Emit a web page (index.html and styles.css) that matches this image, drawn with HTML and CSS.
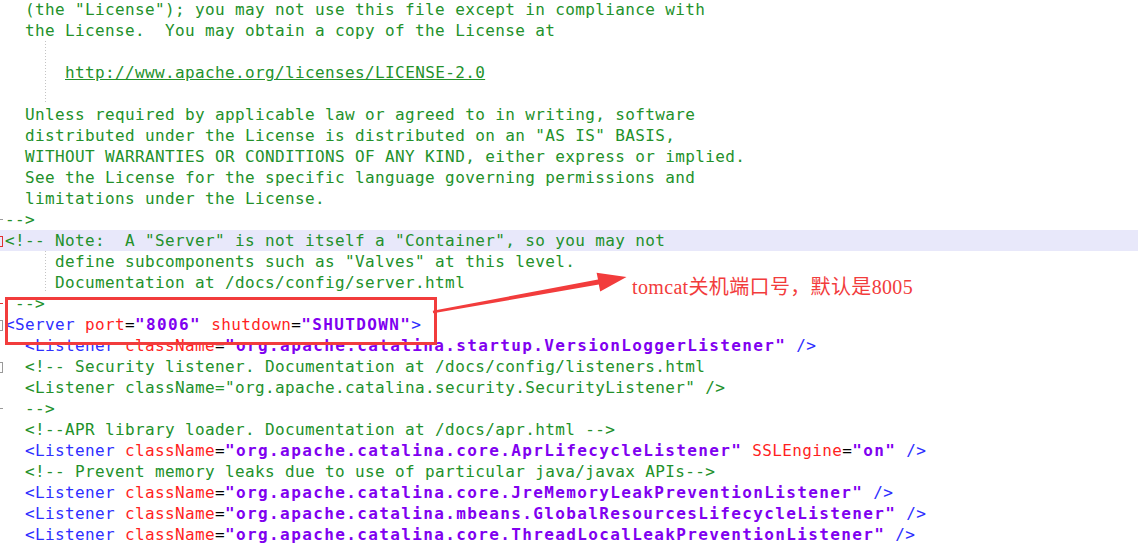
FILE: index.html
```html
<!DOCTYPE html>
<html>
  <head>
    <title>server.xml</title>
    <link rel="stylesheet" href="styles.css">
  </head>
  <body>
    <div class="editor">
      <div class="line"><span class="gutter"></span><span class="code c">  (the "License"); you may not use this file except in compliance with</span></div>
      <div class="line"><span class="gutter"></span><span class="code c">  the License.  You may obtain a copy of the License at</span></div>
      <div class="line guide"><span class="gutter"></span><span class="code c"> </span></div>
      <div class="line guide"><span class="gutter"></span><span class="code c">      <span class="link">http://www.apache.org/licenses/LICENSE-2.0</span></span></div>
      <div class="line guide"><span class="gutter"></span><span class="code c"> </span></div>
      <div class="line"><span class="gutter"></span><span class="code c">  Unless required by applicable law or agreed to in writing, software</span></div>
      <div class="line"><span class="gutter"></span><span class="code c">  distributed under the License is distributed on an "AS IS" BASIS,</span></div>
      <div class="line"><span class="gutter"></span><span class="code c">  WITHOUT WARRANTIES OR CONDITIONS OF ANY KIND, either express or implied.</span></div>
      <div class="line"><span class="gutter"></span><span class="code c">  See the License for the specific language governing permissions and</span></div>
      <div class="line"><span class="gutter"></span><span class="code c">  limitations under the License.</span></div>
      <div class="line"><span class="gutter"><span class="tick"></span></span><span class="code c">--&gt;</span></div>
      <div class="line current"><span class="gutter"><span class="fold red"></span></span><span class="code c">&lt;!-- Note:  A "Server" is not itself a "Container", so you may not</span></div>
      <div class="line guide"><span class="gutter"></span><span class="code c">     define subcomponents such as "Valves" at this level.</span></div>
      <div class="line guide"><span class="gutter"></span><span class="code c">     Documentation at /docs/config/server.html</span></div>
      <div class="line"><span class="gutter"><span class="tick red"></span></span><span class="code c"> --&gt;</span></div>
      <div class="line"><span class="gutter"><span class="fold"></span></span><span class="code"><span class="t">&lt;Server</span> <span class="a">port</span>=<span class="v">"8006"</span> <span class="a">shutdown</span>=<span class="v">"SHUTDOWN"</span><span class="t">&gt;</span></span></div>
      <div class="line"><span class="gutter"></span><span class="code">  <span class="t">&lt;Listener</span> <span class="a">className</span>=<span class="v">"org.apache.catalina.startup.VersionLoggerListener"</span> <span class="t">/&gt;</span></span></div>
      <div class="line"><span class="gutter"><span class="fold"></span></span><span class="code c">  &lt;!-- Security listener. Documentation at /docs/config/listeners.html</span></div>
      <div class="line"><span class="gutter"></span><span class="code c">  &lt;Listener className="org.apache.catalina.security.SecurityListener" /&gt;</span></div>
      <div class="line"><span class="gutter"><span class="tick"></span></span><span class="code c">  --&gt;</span></div>
      <div class="line"><span class="gutter"></span><span class="code c">  &lt;!--APR library loader. Documentation at /docs/apr.html --&gt;</span></div>
      <div class="line"><span class="gutter"></span><span class="code">  <span class="t">&lt;Listener</span> <span class="a">className</span>=<span class="v">"org.apache.catalina.core.AprLifecycleListener"</span> <span class="a">SSLEngine</span>=<span class="v">"on"</span> <span class="t">/&gt;</span></span></div>
      <div class="line"><span class="gutter"></span><span class="code c">  &lt;!-- Prevent memory leaks due to use of particular java/javax APIs--&gt;</span></div>
      <div class="line"><span class="gutter"></span><span class="code">  <span class="t">&lt;Listener</span> <span class="a">className</span>=<span class="v">"org.apache.catalina.core.JreMemoryLeakPreventionListener"</span> <span class="t">/&gt;</span></span></div>
      <div class="line"><span class="gutter"></span><span class="code">  <span class="t">&lt;Listener</span> <span class="a">className</span>=<span class="v">"org.apache.catalina.mbeans.GlobalResourcesLifecycleListener"</span> <span class="t">/&gt;</span></span></div>
      <div class="line"><span class="gutter"></span><span class="code">  <span class="t">&lt;Listener</span> <span class="a">className</span>=<span class="v">"org.apache.catalina.core.ThreadLocalLeakPreventionListener"</span> <span class="t">/&gt;</span></span></div>

      <div class="mark-box"></div>
      <svg class="mark-arrow" width="1138" height="559" viewBox="0 0 1138 559">
        <polygon points="433.2,313.2 598.8,284.6 600.2,291.4 626.5,277 596.6,272.8 598,279.4 432.8,310.8" fill="#f23c3c"/>
      </svg>
      <div class="mark-note">tomcat关机端口号，默认是8005</div>
    </div>
  </body>
</html>
```
FILE: styles.css
```css
body {
  margin: 0;
  background-color: white;
}
.editor {
  position: relative;
  height: 560px;
  margin-top: -1px;
  overflow: hidden;
  font-family: "DejaVu Sans Mono", "Liberation Mono", monospace;
  font-size: 16px;
  letter-spacing: 0.37px;
  line-height: 21px;
  color: black;
}
.line {
  display: flex;
  height: 21px;
}
.line.current {
  background-color: #e8e8fa;
}
.line.guide {
  background-image: repeating-linear-gradient(to bottom, #c4c4c4 0 1px, transparent 1px 3px);
  background-size: 1px 100%;
  background-position: 45px 0;
  background-repeat: no-repeat;
}
.gutter {
  width: 5px;
  flex-shrink: 0;
  position: relative;
}
.code {
  white-space: pre;
}
.c {
  color: #23912a;
}
.link {
  text-decoration: underline;
}
.t {
  color: #2f2fff;
}
.a {
  color: #ff1f1f;
}
.v {
  color: #8000f0;
  font-weight: bold;
  letter-spacing: 1.37px;
}
.fold {
  position: absolute;
  left: -6px;
  top: 6px;
  width: 7px;
  height: 9px;
  border: 1px solid #9a9a9a;
}
.fold.red {
  border-color: #e23030;
}
.tick {
  position: absolute;
  left: 0;
  top: 10px;
  width: 3px;
  height: 1px;
  background-color: #9a9a9a;
}
.tick.red {
  background-color: #e23030;
}
.mark-box {
  position: absolute;
  left: 5px;
  top: 298px;
  width: 426px;
  height: 42px;
  border: 3px solid #f23c3c;
}
.mark-arrow {
  position: absolute;
  left: 0;
  top: 1px;
  pointer-events: none;
}
.mark-note {
  position: absolute;
  left: 632px;
  top: 275px;
  font-family: "Liberation Serif", "Noto Sans CJK SC", serif;
  font-size: 20px;
  line-height: 26px;
  letter-spacing: 0.35px;
  color: #f23c3c;
  white-space: nowrap;
}
```
